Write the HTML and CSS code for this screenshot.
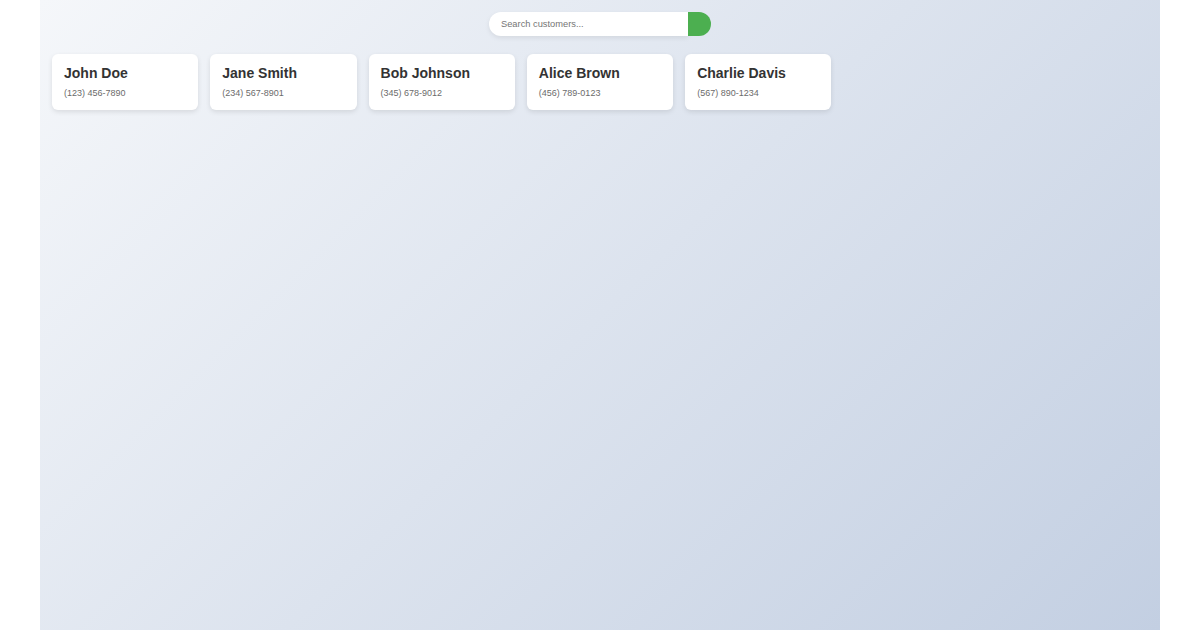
FILE: index.html
```html
<!DOCTYPE html>
<html lang="en">
<head>
    <meta charset="UTF-8">
    <meta name="viewport" content="width=device-width, initial-scale=1.0">
    <title>Customers</title>
    <link rel="stylesheet" href="styles.css">
</head>
<body>
    <div class="app">
        <div class="search-bar">
            <input class="search-input" type="text" placeholder="Search customers...">
            <button class="search-button"></button>
        </div>

        <div class="customer-list">
            <div class="customer-card">
                <h3 class="customer-name">John Doe</h3>
                <p class="customer-phone">(123) 456-7890</p>
            </div>
            <div class="customer-card">
                <h3 class="customer-name">Jane Smith</h3>
                <p class="customer-phone">(234) 567-8901</p>
            </div>
            <div class="customer-card">
                <h3 class="customer-name">Bob Johnson</h3>
                <p class="customer-phone">(345) 678-9012</p>
            </div>
            <div class="customer-card">
                <h3 class="customer-name">Alice Brown</h3>
                <p class="customer-phone">(456) 789-0123</p>
            </div>
            <div class="customer-card">
                <h3 class="customer-name">Charlie Davis</h3>
                <p class="customer-phone">(567) 890-1234</p>
            </div>
        </div>
    </div>
</body>
</html>
```

FILE: styles.css
```css
body {
    margin: 0;
    font-family: "Liberation Sans", Arial, sans-serif;
    background: #fff;
}

.app {
    max-width: 1120px;
    margin: 0 auto;
    min-height: 100vh;
    padding: 12px;
    box-sizing: border-box;
    background: linear-gradient(135deg, #f5f7fa 0%, #c3cfe2 100%);
}

.search-bar {
    display: flex;
    justify-content: center;
    margin-bottom: 18px;
}

.search-input {
    width: 199px;
    height: 24px;
    box-sizing: border-box;
    padding: 0 12px;
    border: none;
    border-radius: 12px 0 0 12px;
    background: white;
    font-family: inherit;
    font-size: 9.3px;
    color: #333;
    outline: none;
    box-shadow: 0 2px 5px rgba(0, 0, 0, 0.08);
}

.search-input::placeholder {
    color: #757575;
}

.search-button {
    width: 23px;
    height: 24px;
    border: none;
    border-radius: 0 12px 12px 0;
    background: #4caf50;
    cursor: pointer;
    padding: 0;
}

.customer-list {
    display: grid;
    grid-template-columns: repeat(7, 1fr);
    gap: 12px;
}

.customer-card {
    height: 56px;
    box-sizing: border-box;
    background: white;
    border-radius: 6px;
    padding: 11px 12px 12px;
    box-shadow: 0 2px 5px rgba(0, 0, 0, 0.1);
}

.customer-name {
    margin: 0 0 7px;
    font-size: 14px;
    font-weight: bold;
    color: #333;
}

.customer-phone {
    margin: 0;
    font-size: 9px;
    color: #6b6b6b;
}
```
